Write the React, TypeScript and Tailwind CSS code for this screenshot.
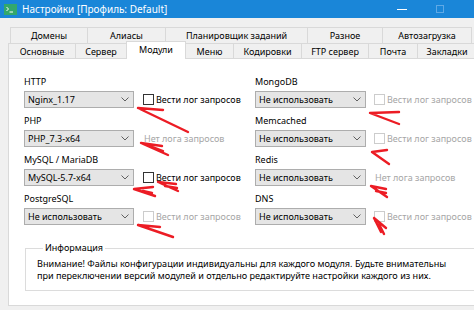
import React from 'react'

const row1 = [
  { label: 'Домены', w: 78 },
  { label: 'Алиасы', w: 79 },
  { label: 'Планировщик заданий', w: 143 },
  { label: 'Разное', w: 76 },
  { label: 'Автозагрузка', w: 90 },
]

const row2 = [
  { label: 'Основные', w: 68 },
  { label: 'Сервер', w: 52 },
  { label: 'Модули', w: 60, active: true },
  { label: 'Меню', w: 49 },
  { label: 'Кодировки', w: 69 },
  { label: 'FTP сервер', w: 68 },
  { label: 'Почта', w: 50 },
  { label: 'Закладки', w: 60 },
]

type Log = 'on' | 'off' | 'none'

const left: { label: string; value: string; log: Log }[] = [
  { label: 'HTTP', value: 'Nginx_1.17', log: 'on' },
  { label: 'PHP', value: 'PHP_7.3-x64', log: 'none' },
  { label: 'MySQL / MariaDB', value: 'MySQL-5.7-x64', log: 'on' },
  { label: 'PostgreSQL', value: 'Не использовать', log: 'off' },
]

const right: { label: string; value: string; log: Log }[] = [
  { label: 'MongoDB', value: 'Не использовать', log: 'off' },
  { label: 'Memcached', value: 'Не использовать', log: 'off' },
  { label: 'Redis', value: 'Не использовать', log: 'none' },
  { label: 'DNS', value: 'Не использовать', log: 'off' },
]

function Combo({ value, wide }: { value: string; wide?: boolean }) {
  return (
    <div
      className={`flex items-center justify-between h-[17px] bg-[#e5e5e5] border border-[#adadad] pl-[3px] pr-[4px] ${
        wide ? 'w-[111px]' : 'w-[110px]'
      }`}
    >
      <span className="leading-[15px] whitespace-nowrap">{value}</span>
      <svg width="8" height="5" viewBox="0 0 8 5" className="shrink-0">
        <polyline points="0.5,0.5 4,4 7.5,0.5" fill="none" stroke="#606060" strokeWidth="1" />
      </svg>
    </div>
  )
}

function Field({ f, side }: { f: { label: string; value: string; log: Log }; side: 'l' | 'r' }) {
  return (
    <div className="flex flex-col">
      <div className="h-[14px] leading-[14px] whitespace-nowrap">{f.label}</div>
      <div className="mt-[2px] flex items-center">
        <Combo value={f.value} wide={side === 'r'} />
        {f.log === 'none' ? (
          <span className={`whitespace-nowrap text-[#a6a6a6] ${side === 'l' ? 'ml-[10px]' : 'ml-[9px]'}`}>
            Нет лога запросов
          </span>
        ) : (
          <div className={`flex items-center ${side === 'l' ? 'ml-[9px]' : 'ml-[8px]'}`}>
            <div
              className={`shrink-0 w-[11px] h-[11px] bg-white border ${
                f.log === 'on' ? 'border-[#333333]' : 'border-[#cccccc]'
              }`}
            />
            <span className={`ml-[2px] whitespace-nowrap ${f.log === 'on' ? 'text-black' : 'text-[#a6a6a6]'}`}>
              Вести лог запросов
            </span>
          </div>
        )}
      </div>
    </div>
  )
}

function Arrows() {
  // hand drawn red marks over the screenshot
  const paths = [
    'M163 110 L138 108 L188 132',
    'M162 146 L141 143 L168 155 M150 146 L163 151',
    'M153 187 L134 189 L155 196 M143 191 L152 193',
    'M176 184 L158 182 L178 191 M165 186 L177 188',
    'M160 227 L138 225 L173 237',
    'M399 112 L370 113 L399 124',
    'M387 150 L372 152 L389 164',
    'M386 189 L371 186 L387 197 M376 191 L386 193',
    'M374 218 L381 232 M374 218 L386 228 M379 224 L384 234',
  ]
  return (
    <svg className="absolute left-0 top-0 pointer-events-none" width="474" height="310" viewBox="0 0 474 310">
      {paths.map((d, i) => (
        <path key={i} d={d} fill="none" stroke="#ec1c24" strokeWidth="2.4" strokeLinecap="round" strokeLinejoin="round" />
      ))}
    </svg>
  )
}

export default function App() {
  return (
    <div className="relative w-[474px] h-[310px] overflow-hidden bg-[#f0f0f0] font-['Noto_Sans',sans-serif] text-[9px] text-black">
      {/* title bar */}
      <div className="flex items-center h-[18px] bg-[#1a86d8] text-white">
        <svg width="13" height="11" viewBox="0 0 13 11" className="ml-[4px]">
          <rect width="13" height="11" fill="#33a86c" />
          <polyline points="2.5,3 4.5,5 2.5,7" fill="none" stroke="#fff" strokeWidth="1" />
          <line x1="5.5" y1="8" x2="9" y2="8" stroke="#fff" strokeWidth="1" />
        </svg>
        <span className="ml-[5px] text-[10px] leading-[18px]">Настройки [Профиль: Default]</span>
        <div className="ml-auto flex items-center">
          <div className="w-[10px] h-[1px] bg-white" />
          <div className="ml-[29px] mr-[30px] w-[8px] h-[8px] border border-[#5fa9e6]" />
        </div>
      </div>

      {/* tabs */}
      <div className="pt-[9px]">
        <div className="flex ml-[10px] h-[16px]">
          {row1.map((t) => (
            <div
              key={t.label}
              style={{ width: t.w }}
              className="shrink-0 -ml-px first:ml-0 border border-b-0 border-[#d9d9d9] bg-[#f0f0f0] text-center leading-[15px] whitespace-nowrap"
            >
              {t.label}
            </div>
          ))}
        </div>
        <div className="relative z-10 flex items-end ml-[8px] h-[15px]">
          {row2.map((t) => (
            <div
              key={t.label}
              style={{ width: t.w }}
              className={`shrink-0 -ml-px first:ml-0 border border-b-0 border-[#d9d9d9] text-center whitespace-nowrap overflow-hidden ${
                t.active ? 'h-[18px] -mb-px bg-white leading-[15px]' : 'h-[15px] bg-[#f0f0f0] leading-[15px]'
              }`}
            >
              {t.label}
            </div>
          ))}
        </div>
      </div>

      {/* panel */}
      <div className="ml-[8px] h-[248px] bg-white border border-r-0 border-[#d9d9d9] pl-[15px] pt-[16px]">
        <div className="flex">
          <div className="w-[231px] flex flex-col gap-[6px]">
            {left.map((f) => (
              <Field key={f.label} f={f} side="l" />
            ))}
          </div>
          <div className="flex flex-col gap-[6px]">
            {right.map((f) => (
              <Field key={f.label} f={f} side="r" />
            ))}
          </div>
        </div>

        <fieldset className="mt-[17px] ml-[1px] w-[470px] border border-[#dcdcdc] pl-[11px] pb-[8px]">
          <legend className="ml-[6px] px-[2px] leading-[12px]">Информация</legend>
          <div className="pt-[4px] leading-[12px] whitespace-nowrap text-[9.1px]">
            <div>Внимание! Файлы конфигурации индивидуальны для каждого модуля. Будьте внимательны</div>
            <div>при переключении версий модулей и отдельно редактируйте настройки каждого из них.</div>
          </div>
        </fieldset>
      </div>

      <Arrows />
    </div>
  )
}
